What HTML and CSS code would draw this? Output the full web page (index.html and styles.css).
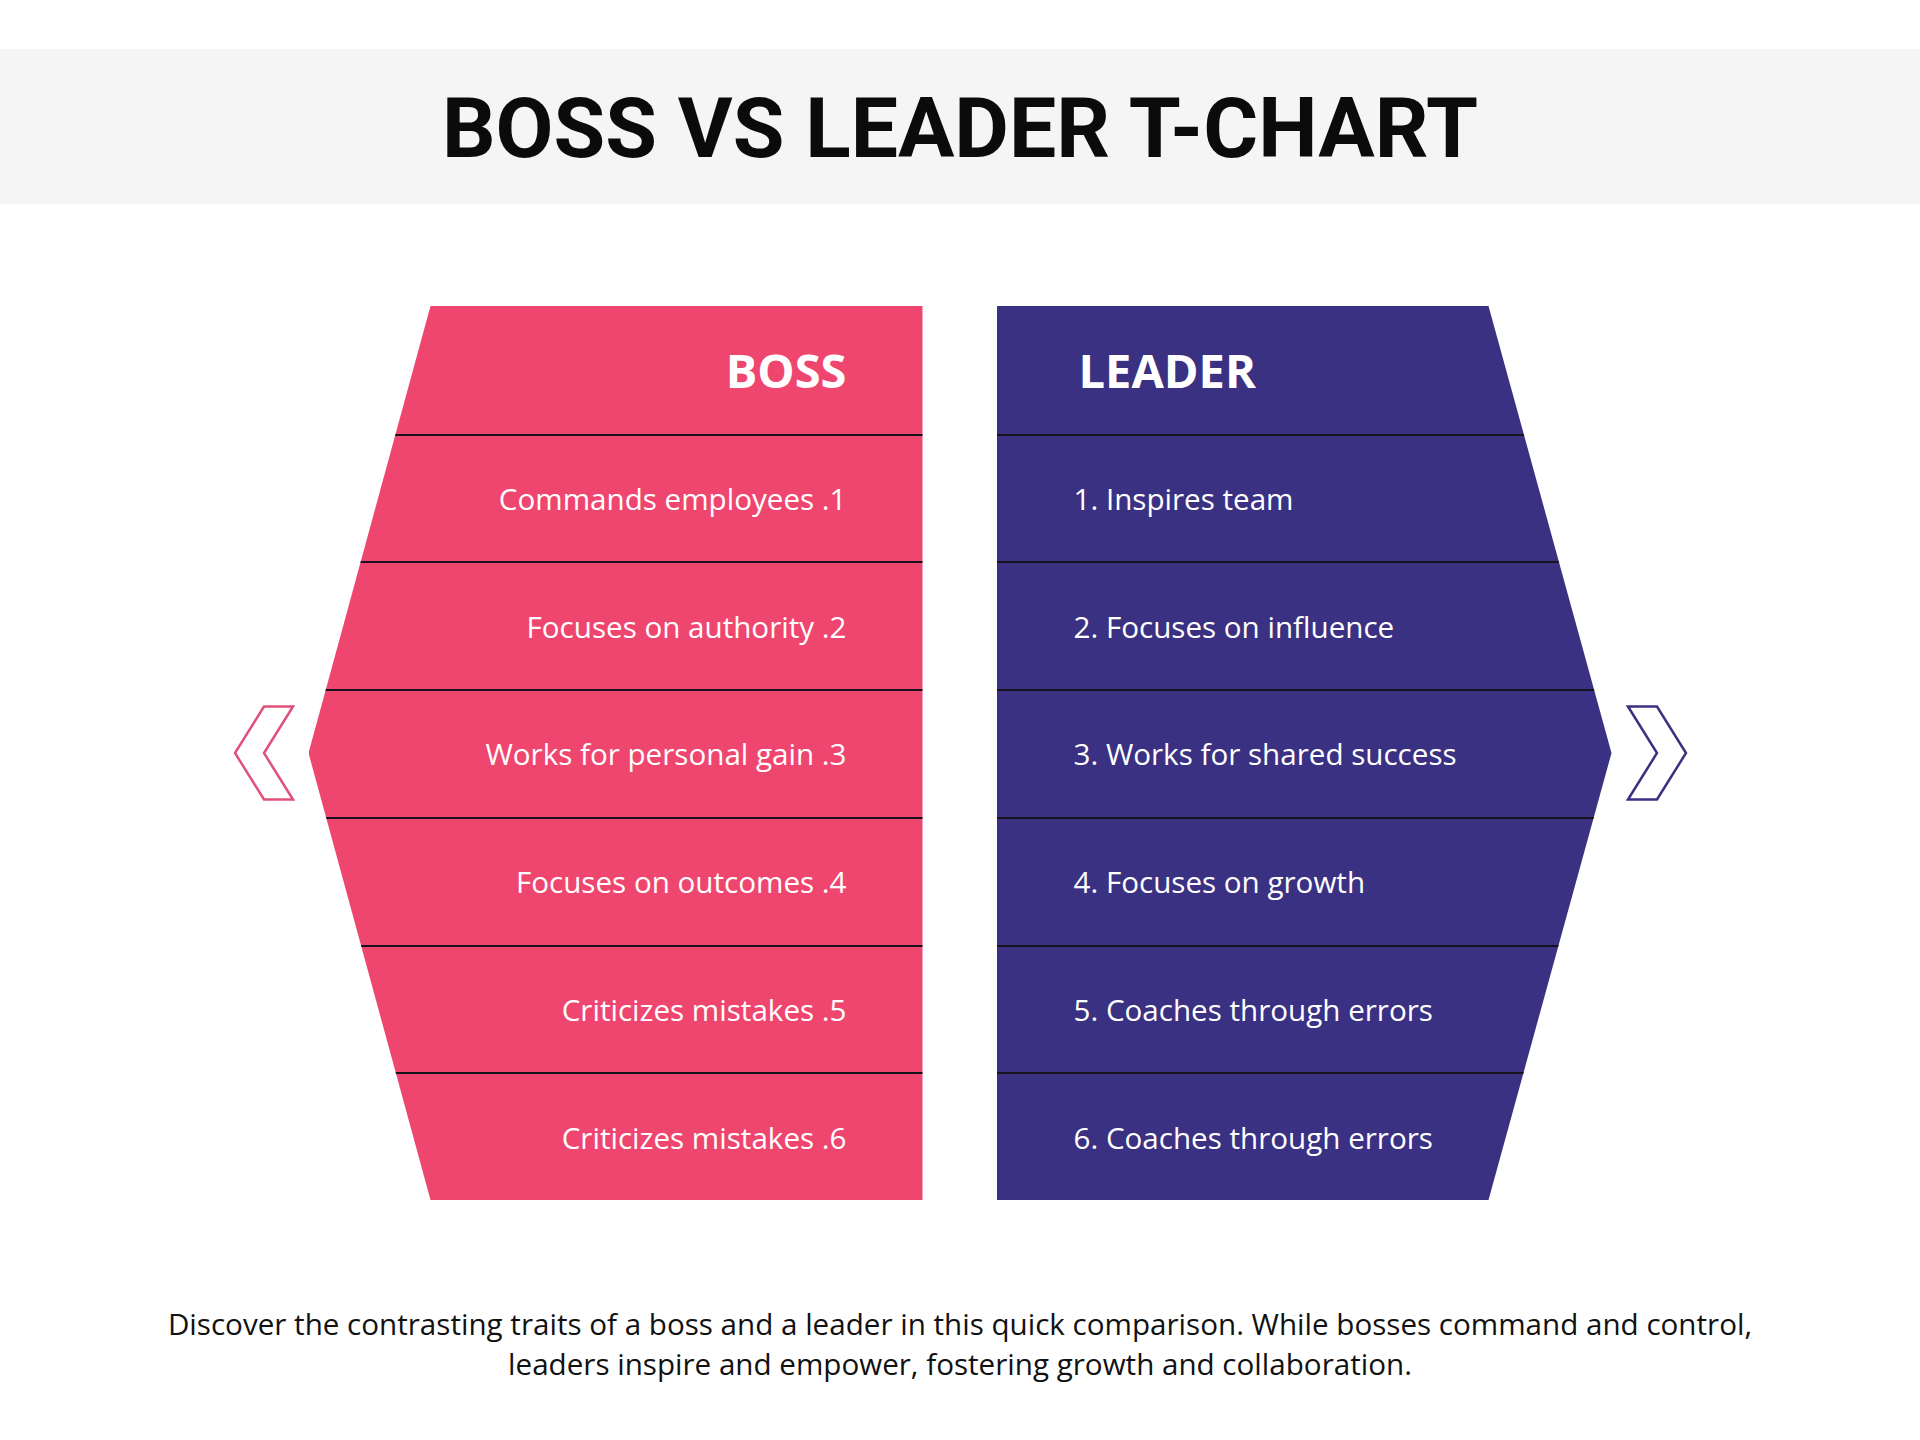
FILE: index.html
```html
<!DOCTYPE html>
<html lang="en">
<head>
<meta charset="utf-8">
<title>Boss vs Leader T-Chart</title>
<link rel="stylesheet" href="styles.css">
</head>
<body>
<header class="banner">
  <h1 class="title">BOSS VS LEADER T-CHART</h1>
</header>
<main class="chart">
  <svg class="chevron" viewBox="0 0 62 96" width="62" height="96" aria-hidden="true">
    <polygon points="31,1.5 60,1.5 31,48 60,94.5 31,94.5 2,48" fill="none" stroke="#e0507a" stroke-width="2.5" stroke-linejoin="miter"/>
  </svg>
  <section class="panel panel-boss">
    <div class="row head">BOSS</div>
    <div class="row">Commands employees .1</div>
    <div class="row">Focuses on authority .2</div>
    <div class="row">Works for personal gain .3</div>
    <div class="row">Focuses on outcomes .4</div>
    <div class="row">Criticizes mistakes .5</div>
    <div class="row">Criticizes mistakes .6</div>
  </section>
  <section class="panel panel-leader">
    <div class="row head">LEADER</div>
    <div class="row">1. Inspires team</div>
    <div class="row">2. Focuses on influence</div>
    <div class="row">3. Works for shared success</div>
    <div class="row">4. Focuses on growth</div>
    <div class="row">5. Coaches through errors</div>
    <div class="row">6. Coaches through errors</div>
  </section>
  <svg class="chevron" viewBox="0 0 62 96" width="62" height="96" aria-hidden="true">
    <polygon points="2,1.5 31,1.5 60,48 31,94.5 2,94.5 31,48" fill="none" stroke="#3b3182" stroke-width="2.5" stroke-linejoin="miter"/>
  </svg>
</main>
<p class="summary">Discover the contrasting traits of a boss and a leader in this quick comparison. While bosses command and control,<br>leaders inspire and empower, fostering growth and collaboration.</p>
</body>
</html>
```
FILE: styles.css
```css
* { box-sizing: border-box; }
html, body { margin: 0; padding: 0; background: #ffffff; }
body {
  width: 1920px;
  height: 1440px;
  font-family: "Open Sans", "Liberation Sans", sans-serif;
  color: #111111;
}
.banner {
  margin-top: 49px;
  height: 155px;
  background: #f5f5f5;
  display: flex;
  align-items: center;
  justify-content: center;
}
.title {
  margin: 0;
  font-family: Roboto, "Liberation Sans", sans-serif;
  font-weight: 700;
  font-size: 84px;
  color: #0b0b0b;
  line-height: 1;
  padding-top: 4px;
}
.chart {
  margin-top: 102px;
  display: flex;
  align-items: center;
  justify-content: center;
  height: 894px;
}
.chevron { flex: 0 0 62px; display: block; }
.chevron:first-child { margin-right: 14px; }
.chevron:last-child { margin-left: 14px; }
.panel {
  height: 894px;
  display: grid;
  grid-template-rows: repeat(7, 1fr);
  color: #ffffff;
}
.panel-boss {
  width: 614px;
  margin-right: 74px;
  background: #ef4670;
  clip-path: polygon(122px 0, 100% 0, 100% 100%, 122px 100%, 0 50%);
  text-align: right;
}
.panel-leader {
  width: 615px;
  background: #3b3182;
  clip-path: polygon(0 0, 492px 0, 100% 50%, 492px 100%, 0 100%);
  text-align: left;
}
.row {
  display: flex;
  align-items: center;
  font-size: 29.6px;
  border-top: 2px solid #16121e;
}
.row.head {
  border-top: none;
  font-size: 47px;
  font-weight: 700;
}
.panel-boss .row { justify-content: flex-end; padding-right: 76px; }
.panel-leader .row { justify-content: flex-start; padding-left: 77px; }
.panel-leader .row.head { padding-left: 82px; }
.summary {
  margin: 104px 0 0;
  text-align: center;
  font-size: 29.6px;
  line-height: 40px;
  color: #111111;
}
```
